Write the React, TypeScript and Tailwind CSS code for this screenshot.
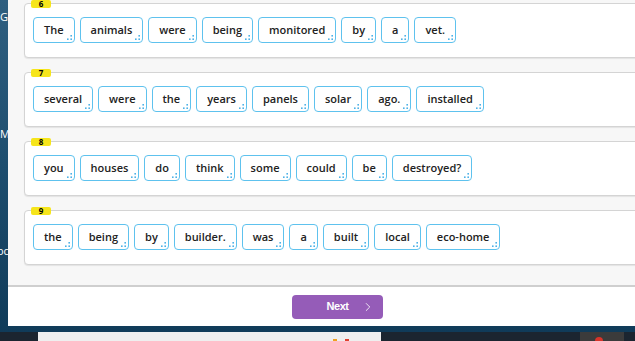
import { ChevronRight } from "lucide-react";

const rows: { n: number; words: string[] }[] = [
  { n: 6, words: ["The", "animals", "were", "being", "monitored", "by", "a", "vet."] },
  { n: 7, words: ["several", "were", "the", "years", "panels", "solar", "ago.", "installed"] },
  { n: 8, words: ["you", "houses", "do", "think", "some", "could", "be", "destroyed?"] },
  { n: 9, words: ["the", "being", "by", "builder.", "was", "a", "built", "local", "eco-home"] },
];

const Grip = () => (
  <svg className="absolute right-[2px] bottom-[2px]" width="5" height="5" viewBox="0 0 5 5">
    <rect x="3.4" y="0" width="1.6" height="1.6" fill="#4fb2e6" />
    <rect x="0" y="3.4" width="1.6" height="1.6" fill="#4fb2e6" />
    <rect x="3.4" y="3.4" width="1.6" height="1.6" fill="#4fb2e6" />
  </svg>
);

const Chip = ({ word }: { word: string }) => (
  <div className="relative h-[26px] px-[10px] flex items-center rounded-[4px] border border-[#5ec2ee] bg-white text-[11px] font-semibold text-[#222]">
    {word}
    <Grip />
  </div>
);

const Card = ({ n, words }: { n: number; words: string[] }) => (
  <div className="relative rounded-[4px] border border-[#d4d4d4] bg-white pl-[8px] pt-[13px] pb-[14px] flex gap-[5px] shadow-[0_1px_1px_rgba(0,0,0,0.08)]">
    <div className="absolute left-[6px] top-[-4px] w-[20px] h-[8px] rounded-[2px] bg-[#f6e51b] text-[8px] leading-[8px] font-bold text-center text-black">
      {n}
    </div>
    {words.map((w, i) => (
      <Chip key={i} word={w} />
    ))}
  </div>
);

export default function App() {
  return (
    <div className="relative w-[635px] h-[341px] overflow-hidden bg-gradient-to-b from-[#2f5f80] via-[#1d4d6e] to-[#0f3a58] font-['Open_Sans',sans-serif]">
      {/* desktop labels peeking out behind the window */}
      <span className="absolute left-0 top-[9px] text-white text-[11px]">Go</span>
      <span className="absolute left-0 top-[126px] text-white text-[11px]">M</span>
      <span className="absolute left-[-3px] top-[243px] text-white text-[11px]">oc</span>

      <div className="relative ml-[8px] w-[659px] flex flex-col bg-white">
        <div className="bg-[#f7f7f7] px-[16px] pt-[3px] pb-[20px] flex flex-col gap-[14px] border-b-2 border-[#cfcfcf]">
          {rows.map((r) => (
            <Card key={r.n} n={r.n} words={r.words} />
          ))}
        </div>
        <div className="h-[39px] flex items-center justify-center">
          <button className="relative w-[91px] h-[24px] rounded-[4px] bg-[#955cb8] text-white text-[11px] font-bold tracking-[-0.4px] font-['Liberation_Sans',sans-serif] flex items-center justify-center">
            Next
            <ChevronRight className="absolute right-[8px] top-[5px]" size={14} strokeWidth={1.4} />
          </button>
        </div>
      </div>

      {/* taskbar strip */}
      <div className="mt-[6px] h-[9px] bg-[#1b2530] flex">
        <div className="ml-[38px] w-[343px] bg-[#efefef] relative">
          <span className="absolute left-[295px] bottom-0 w-[4px] h-[2px] bg-[#f0a020]" />
          <span className="absolute left-[307px] bottom-0 w-[4px] h-[2px] bg-[#e04030]" />
        </div>
        <div className="ml-auto mr-[11px] w-[44px] bg-[#3b3b3b] relative">
          <span className="absolute left-[15px] bottom-[-4px] w-[8px] h-[8px] rounded-full bg-[#d8342a]" />
        </div>
      </div>
    </div>
  );
}
